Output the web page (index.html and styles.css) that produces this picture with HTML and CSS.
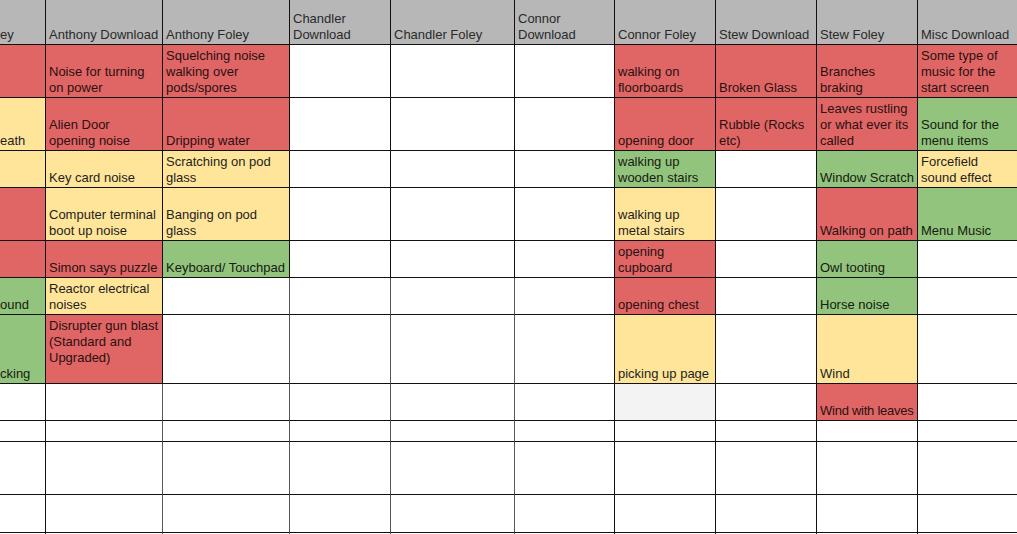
FILE: index.html
```html
<!DOCTYPE html>
<html>
<head>
<meta charset="utf-8">
<link rel="stylesheet" href="styles.css">
</head>
<body>
<div class="sheet">
  <div class="c h first">ey</div>
  <div class="c h">Anthony Download</div>
  <div class="c h">Anthony Foley</div>
  <div class="c h">Chandler Download</div>
  <div class="c h">Chandler Foley</div>
  <div class="c h">Connor Download</div>
  <div class="c h">Connor Foley</div>
  <div class="c h">Stew Download</div>
  <div class="c h">Stew Foley</div>
  <div class="c h last">Misc Download</div>

  <div class="c r first"></div>
  <div class="c r">Noise for turning on power</div>
  <div class="c r">Squelching noise walking over pods/spores</div>
  <div class="c"></div>
  <div class="c"></div>
  <div class="c"></div>
  <div class="c r">walking on floorboards</div>
  <div class="c r">Broken Glass</div>
  <div class="c r">Branches braking</div>
  <div class="c r last">Some type of music for the start screen</div>

  <div class="c y first">eath</div>
  <div class="c r">Alien Door opening noise</div>
  <div class="c r">Dripping water</div>
  <div class="c"></div>
  <div class="c"></div>
  <div class="c"></div>
  <div class="c r">opening door</div>
  <div class="c r">Rubble (Rocks etc)</div>
  <div class="c r">Leaves rustling or what ever its called</div>
  <div class="c g last">Sound for the menu items</div>

  <div class="c y first"></div>
  <div class="c y">Key card noise</div>
  <div class="c y">Scratching on pod glass</div>
  <div class="c"></div>
  <div class="c"></div>
  <div class="c"></div>
  <div class="c g">walking up wooden stairs</div>
  <div class="c"></div>
  <div class="c g nw">Window Scratch</div>
  <div class="c y last">Forcefield sound effect</div>

  <div class="c r first"></div>
  <div class="c y">Computer terminal boot up noise</div>
  <div class="c y">Banging on pod glass</div>
  <div class="c"></div>
  <div class="c"></div>
  <div class="c"></div>
  <div class="c y">walking up metal stairs</div>
  <div class="c"></div>
  <div class="c r nw">Walking on path</div>
  <div class="c g last">Menu Music</div>

  <div class="c r first"></div>
  <div class="c r nw">Simon says puzzle</div>
  <div class="c g nw">Keyboard/ Touchpad</div>
  <div class="c"></div>
  <div class="c"></div>
  <div class="c"></div>
  <div class="c r">opening cupboard</div>
  <div class="c"></div>
  <div class="c g">Owl tooting</div>
  <div class="c last"></div>

  <div class="c g first">ound</div>
  <div class="c y">Reactor electrical noises</div>
  <div class="c thin"></div>
  <div class="c thin"></div>
  <div class="c thin"></div>
  <div class="c"></div>
  <div class="c r">opening chest</div>
  <div class="c"></div>
  <div class="c g">Horse noise</div>
  <div class="c last"></div>

  <div class="c g first">cking</div>
  <div class="c r top">Disrupter gun blast (Standard and Upgraded)</div>
  <div class="c thin"></div>
  <div class="c thin"></div>
  <div class="c thin"></div>
  <div class="c"></div>
  <div class="c y">picking up page</div>
  <div class="c"></div>
  <div class="c y">Wind</div>
  <div class="c last"></div>

  <div class="c first"></div>
  <div class="c thin"></div>
  <div class="c thin"></div>
  <div class="c thin"></div>
  <div class="c thin"></div>
  <div class="c"></div>
  <div class="c lg"></div>
  <div class="c"></div>
  <div class="c r nw tight">Wind with leaves</div>
  <div class="c last"></div>

  <div class="c first"></div>
  <div class="c thin"></div>
  <div class="c thin"></div>
  <div class="c thin"></div>
  <div class="c thin"></div>
  <div class="c"></div>
  <div class="c"></div>
  <div class="c"></div>
  <div class="c"></div>
  <div class="c last"></div>

  <div class="c first"></div>
  <div class="c thin"></div>
  <div class="c thin"></div>
  <div class="c thin"></div>
  <div class="c thin"></div>
  <div class="c"></div>
  <div class="c"></div>
  <div class="c"></div>
  <div class="c"></div>
  <div class="c last"></div>

  <div class="c first"></div>
  <div class="c thin"></div>
  <div class="c thin"></div>
  <div class="c thin"></div>
  <div class="c thin"></div>
  <div class="c"></div>
  <div class="c"></div>
  <div class="c"></div>
  <div class="c"></div>
  <div class="c last"></div>

  <div class="c first"></div>
  <div class="c thin"></div>
  <div class="c thin"></div>
  <div class="c thin"></div>
  <div class="c thin"></div>
  <div class="c"></div>
  <div class="c"></div>
  <div class="c"></div>
  <div class="c"></div>
  <div class="c last"></div>
</div>
</body>
</html>
```

FILE: styles.css
```css
html, body {
  margin: 0;
  padding: 0;
  background: #ffffff;
  overflow: hidden;
}

.sheet {
  display: grid;
  grid-template-columns: 46px 117px 127px 101px 124px 100px 101px 101px 101px 99px;
  grid-template-rows: 45px 53px 53px 37px 53px 37px 37px 69px 37px 21px 53px 38px 40px;
  width: 1017px;
  height: 534px;
  overflow: hidden;
  font-family: "Liberation Sans", Arial, sans-serif;
  font-size: 13px;
  line-height: 16px;
  color: #1e1e1e;
}

.c {
  box-sizing: border-box;
  display: flex;
  flex-direction: column;
  justify-content: flex-end;
  padding: 0 3px 1px 3px;
  border-right: 1px solid #111;
  border-bottom: 1px solid #111;
  overflow: hidden;
  background: #ffffff;
}

.c.first {
  padding-left: 0;
}

.c.last {
  border-right: none;
}

.c.thin {
  border-right-color: #555;
}

.c.h {
  background: #b7b7b7;
  color: #2a2a2a;
}

.c.r {
  background: #e06666;
  color: #2a1010;
}

.c.y {
  background: #ffe599;
}

.c.g {
  background: #93c47d;
  color: #142010;
}

.c.lg {
  background: #f3f3f3;
}

.c.top {
  justify-content: flex-start;
  padding-top: 3px;
}

.c.nw {
  white-space: nowrap;
}

.c.tight {
  letter-spacing: -0.25px;
  padding-left: 3px;
  padding-right: 0;
}
```
